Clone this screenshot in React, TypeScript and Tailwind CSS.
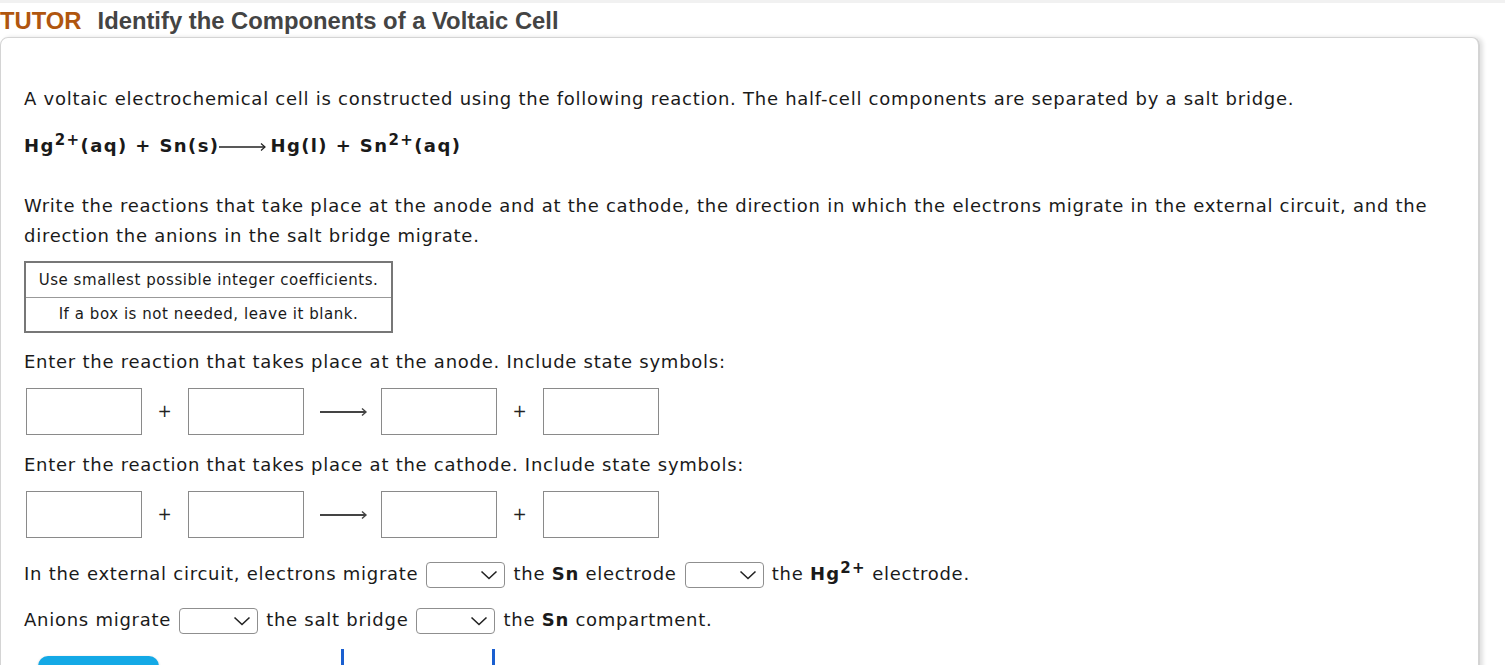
function AnswerBox() {
  return <div className="h-[47px] w-[116px] border border-[#8a8a8a] bg-white" />;
}

function Plus() {
  return <span className="w-[46px] text-center text-[17px] text-[#222]">+</span>;
}

function LongArrow() {
  return (
    <svg width="48" height="12" viewBox="0 0 48 12" className="ml-[16px] mr-[13px]">
      <line x1="0" y1="6" x2="46" y2="6" stroke="#444" strokeWidth="2" />
      <path d="M42 2.5 L46 6 L42 9.5" fill="none" stroke="#444" strokeWidth="1.4" />
    </svg>
  );
}

function ReactionRow() {
  return (
    <div className="flex items-center pl-[2px]">
      <AnswerBox />
      <Plus />
      <AnswerBox />
      <LongArrow />
      <AnswerBox />
      <Plus />
      <AnswerBox />
    </div>
  );
}

function Select() {
  return (
    <span className="mx-[8px] inline-flex h-[26px] w-[79px] items-center justify-end rounded-[4px] border border-[#8f8f8f] bg-white pr-[6px] align-middle">
      <svg width="18" height="10" viewBox="0 0 18 10">
        <path d="M1.5 1.5 L9 8.5 L16.5 1.5" fill="none" stroke="#222" strokeWidth="1.6" />
      </svg>
    </span>
  );
}

export default function App() {
  return (
    <div
      className="min-h-screen overflow-hidden bg-white text-[#1a1a1a] tracking-[0.74px]"
      style={{ fontFamily: '"DejaVu Sans", Verdana, sans-serif' }}
    >
      <div className="h-[3px] bg-[#f1f1f1]" />
      <h1 className="mt-[4px] flex h-[27px] items-center font-['Liberation_Sans',Arial,sans-serif] text-[23.8px] font-bold leading-none tracking-normal">
        <span className="text-[#b0560f]">TUTOR</span>
        <span className="ml-[16px] text-[#444]">Identify the Components of a Voltaic Cell</span>
      </h1>

      <div className="mt-[3px] w-[1480px] rounded-t-[8px] border border-r-2 border-[#d4d4d4] pb-10 pl-[23px] pt-[46px] shadow-[3px_0_4px_rgba(0,0,0,0.12)]">
        <p className="text-[18px] leading-[30px]">
          A voltaic electrochemical cell is constructed using the following reaction. The half-cell components are separated by a salt bridge.
        </p>

        <p className="mt-[17px] text-[18px] font-bold leading-[30px] tracking-[1.4px]">
          Hg<sup className="text-[15px]">2+</sup>(aq) + Sn(s)
          <svg width="48" height="12" viewBox="0 0 48 12" className="mr-[3px] inline-block align-middle">
            <line x1="0" y1="6" x2="46" y2="6" stroke="#222" strokeWidth="1.3" />
            <path d="M42 2.5 L46 6 L42 9.5" fill="none" stroke="#222" strokeWidth="1.2" />
          </svg>
          Hg(l) + Sn<sup className="text-[15px]">2+</sup>(aq)
        </p>

        <p className="mt-[30px] w-[1430px] text-[18px] leading-[30px]">
          Write the reactions that take place at the anode and at the cathode, the direction in which the electrons migrate in the external circuit, and the direction the anions in the salt bridge migrate.
        </p>

        <table className="mt-[10px] border-collapse border-2 border-[#777] text-[15px] tracking-[0.55px]">
          <tbody>
            <tr>
              <td className="h-[35px] w-[367px] border-b border-[#999] text-center">Use smallest possible integer coefficients.</td>
            </tr>
            <tr>
              <td className="h-[35px] text-center">If a box is not needed, leave it blank.</td>
            </tr>
          </tbody>
        </table>

        <p className="mt-[14px] text-[18px] leading-[30px]">Enter the reaction that takes place at the anode. Include state symbols:</p>
        <div className="mt-[11px]">
          <ReactionRow />
        </div>

        <p className="mt-[15px] text-[18px] leading-[30px]">Enter the reaction that takes place at the cathode. Include state symbols:</p>
        <div className="mt-[11px]">
          <ReactionRow />
        </div>

        <p className="mt-[21px] text-[18px] leading-[30px]">
          In the external circuit, electrons migrate
          <Select />
          the <b>Sn</b> electrode
          <Select />
          the <b className="tracking-[1.2px]">Hg<sup className="text-[15px]">2+</sup></b> electrode.
        </p>

        <p className="mt-[16px] text-[18px] leading-[30px]">
          Anions migrate
          <Select />
          the salt bridge
          <Select />
          the <b>Sn</b> compartment.
        </p>

        <div className="mt-[14px] flex items-start">
          <button className="ml-[14px] mt-[7px] h-[40px] w-[121px] rounded-[10px] bg-[#14a9e6] shadow-[0_1px_3px_rgba(0,0,0,0.2)]" />
          <div className="ml-[182px] h-[40px] w-[154px] border-x-[3px] border-[#1a5fd0]" />
        </div>
      </div>
    </div>
  );
}
